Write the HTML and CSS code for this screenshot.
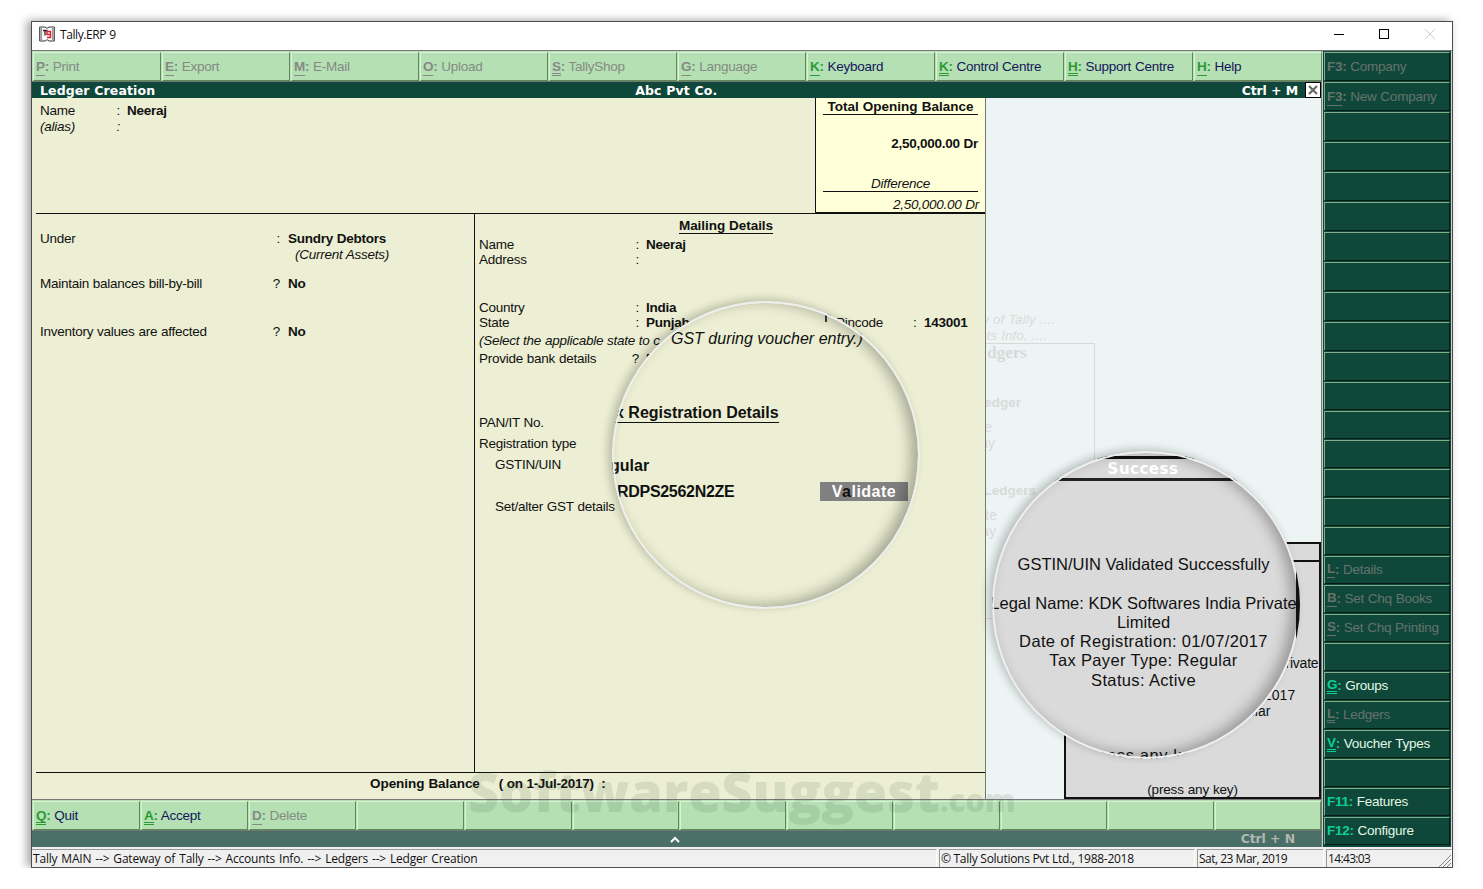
FILE: index.html
```
<!DOCTYPE html>
<html lang="en">

<head>
    <meta charset="UTF-8">
    <title>Tally.ERP 9</title>
    <link rel="stylesheet" href="styles.css">
</head>

<body>
    <div class="window">
        <!--Title bar-->
        <div class="titlebar">
            <svg class="app-icon" width="16" height="16" viewBox="0 0 16 16">
                <path d="M.7 1h5.300l1.500 1h1l1.500-1h5.300v14h-5.300l-1.500-1h-1l-1.500 1H.7z" fill="#fff" stroke="#333" />
                <path d="M2.200 1.500v13M13.800 1.500v13" stroke="#999" stroke-width="1.800" />
                <path d="M4 4.500h4.500M6 4.500v5" stroke="#222" stroke-width="1.300" fill="none" />
                <path d="M11.500 8.500H8v-3h3.500v6H8" stroke="#e01b24" stroke-width="1.400" fill="none" />
            </svg>
            <span class="app-name">Tally.ERP 9</span>
            <svg class="win-controls" width="104" height="12" viewBox="0 0 104 12" fill="none">
                <path d="M1 6.500h10" stroke="#000" />
                <rect x="46.500" y="1.500" width="9" height="9" stroke="#000" />
                <path d="M92 1l10 10M102 1L92 11" stroke="#ccc" />
            </svg>
        </div>

        <div class="main">
            <div class="left">
                <!--Top button bar-->
                <div class="toolbar top-buttons">
                    <div class="tool off"><b class="key">P</b><b>:</b> Print</div>
                    <div class="tool off"><b class="key">E</b><b>:</b> Export</div>
                    <div class="tool off"><b class="key">M</b><b>:</b> E-Mail</div>
                    <div class="tool off"><b class="key">O</b><b>:</b> Upload</div>
                    <div class="tool off"><b class="key double">S</b><b>:</b> TallyShop</div>
                    <div class="tool off"><b class="key">G</b><b>:</b> Language</div>
                    <div class="tool"><b class="key">K</b><b>:</b> Keyboard</div>
                    <div class="tool"><b class="key double">K</b><b>:</b> Control Centre</div>
                    <div class="tool"><b class="key double">H</b><b>:</b> Support Centre</div>
                    <div class="tool"><b class="key">H</b><b>:</b> Help</div>
                </div>

                <div class="screen-title">
                    <span>Ledger Creation</span>
                    <span class="company">Abc Pvt Co.</span>
                    <span class="shortcut">Ctrl + M</span>
                    <svg class="close" width="16" height="16" viewBox="0 0 16 16">
                        <rect x=".5" y=".5" width="15" height="15" fill="#fff" stroke="#000" />
                        <path d="M4 4l8 8M12 4l-8 8" stroke="#666" stroke-width="2.200" />
                    </svg>
                </div>

                <div class="workspace">
                    <!--Ledger form-->
                    <div class="form">
                        <div class="form-head">
                            <div class="identity">
                                <div class="field"><span class="label">Name</span><span class="sep">:</span><b>Neeraj</b></div>
                                <div class="field"><i class="label">(alias)</i><i class="sep">:</i></div>
                            </div>
                            <div class="totals">
                                <div class="totals-title">Total Opening Balance</div>
                                <div class="totals-value">2,50,000.00 Dr</div>
                                <div class="difference">Difference</div>
                                <div class="difference-value">2,50,000.00 Dr</div>
                            </div>
                        </div>

                        <div class="form-body">
                            <div class="grouping">
                                <div class="field"><span class="label">Under</span><span class="sep">:</span><b>Sundry Debtors</b></div>
                                <div class="field group-name"><i>(Current Assets)</i></div>
                                <div class="field bill"><span class="label">Maintain balances bill-by-bill</span><span class="sep">?</span><b>No</b></div>
                                <div class="field inventory"><span class="label">Inventory values are affected</span><span class="sep">?</span><b>No</b></div>
                            </div>
                            <div class="mailing">
                                <div class="mailing-title"><span>Mailing Details</span></div>
                                <div class="field"><span class="label">Name</span><span class="sep">:</span><b>Neeraj</b></div>
                                <div class="field"><span class="label">Address</span><span class="sep">:</span></div>
                                <div class="field country"><span class="label">Country</span><span class="sep">:</span><b>India</b></div>
                                <div class="field"><span class="label">State</span><span class="sep">:</span><b class="state">Punjab</b><span class="pincode">Pincode</span><span class="pin-sep">:</span><b>143001</b></div>
                                <div class="field note"><i>(Select the applicable state to c</i></div>
                                <div class="field bank"><span class="label">Provide bank details</span><span class="sep">?</span><b>No</b></div>
                                <div class="field pan"><span class="label">PAN/IT No.</span></div>
                                <div class="field reg"><span class="label">Registration type</span></div>
                                <div class="field gstin"><span class="label">GSTIN/UIN</span></div>
                                <div class="field alter"><span class="label">Set/alter GST details</span></div>
                            </div>
                        </div>

                        <div class="form-foot"><b>Opening Balance</b><b class="on-date">( on 1-Jul-2017)&nbsp; :</b></div>
                    </div>

                    <!--Menus behind the form-->
                    <div class="backdrop">
                        <div class="menu-path">
                            <div><span>y of Tally ....</span></div>
                            <div><span>nts Info. ....</span></div>
                        </div>
                        <div class="menu">
                            <div class="menu-title"><span>dgers</span></div>
                            <div class="menu-group single"><span>edger</span></div>
                            <div class="menu-item create"><span>e</span></div>
                            <div class="menu-item display"><span>ay</span></div>
                            <div class="menu-group multiple"><span>Ledgers</span></div>
                            <div class="menu-item create2"><span>te</span></div>
                            <div class="menu-item display2"><span>ay</span></div>
                        </div>
                        <div class="dialog">
                            <div class="dialog-head"></div>
                            <div class="dialog-text">
                                <br><br>
                                <span class="legal">Legal Name: KDK Softwares India Private</span><br>
                                <br>
                                Date of Registration: 01/07/2017<br>
                                Tax Payer Type: Regular
                            </div>
                            <div class="dialog-foot">(press any key)</div>
                        </div>
                    </div>
                </div>

                <!--Bottom button bar-->
                <div class="toolbar bottom-buttons">
                    <div class="tool"><b class="key double">Q</b><b>:</b> Quit</div>
                    <div class="tool"><b class="key double">A</b><b>:</b> Accept</div>
                    <div class="tool off"><b class="key">D</b><b>:</b> Delete</div>
                    <div class="tool"></div>
                    <div class="tool"></div>
                    <div class="tool"></div>
                    <div class="tool"></div>
                    <div class="tool"></div>
                    <div class="tool"></div>
                    <div class="tool"></div>
                    <div class="tool"></div>
                    <div class="tool"></div>
                </div>
                <div class="calculator">
                    <svg width="10" height="7" viewBox="0 0 10 7"><path d="M1 6l4-4 4 4" fill="none" stroke="#fff" stroke-width="2" /></svg>
                    <span class="calc-key">Ctrl + N</span>
                </div>
            </div>

            <!--Right button bar-->
            <div class="side">
                <div class="side-btn off"><b>F3:</b> Company</div>
                <div class="side-btn off"><b class="key">F3</b><b>:</b> New Company</div>
                <div class="side-btn"></div>
                <div class="side-btn"></div>
                <div class="side-btn"></div>
                <div class="side-btn"></div>
                <div class="side-btn"></div>
                <div class="side-btn"></div>
                <div class="side-btn"></div>
                <div class="side-btn"></div>
                <div class="side-btn"></div>
                <div class="side-btn"></div>
                <div class="side-btn"></div>
                <div class="side-btn"></div>
                <div class="side-btn"></div>
                <div class="side-btn"></div>
                <div class="side-btn"></div>
                <div class="side-btn off"><b class="key">L</b><b>:</b> Details</div>
                <div class="side-btn off"><b class="key">B</b><b>:</b> Set Chq Books</div>
                <div class="side-btn off"><b class="key">S</b><b>:</b> Set Chq Printing</div>
                <div class="side-btn"></div>
                <div class="side-btn"><b class="key double">G</b><b>:</b> Groups</div>
                <div class="side-btn off"><b class="key double">L</b><b>:</b> Ledgers</div>
                <div class="side-btn"><b class="key double">V</b><b>:</b> Voucher Types</div>
                <div class="side-btn"></div>
                <div class="side-btn"><b>F11:</b> Features</div>
                <div class="side-btn"><b>F12:</b> Configure</div>
            </div>
        </div>

        <!--Status bar-->
        <div class="statusbar">
            <div class="status path">Tally MAIN --&gt; Gateway of Tally --&gt; Accounts Info. --&gt; Ledgers --&gt; Ledger Creation</div>
            <div class="status copy">© Tally Solutions Pvt Ltd., 1988-2018</div>
            <div class="status date">Sat, 23 Mar, 2019</div>
            <div class="status time">14:43:03
                <svg class="grip" width="12" height="12" viewBox="0 0 12 12"><path d="M0 12L12 0M4 12l8-8M8 12l4-4" stroke="#888" fill="none" /></svg>
            </div>
        </div>

        <div class="watermark">SoftwareSuggest<span>.com</span></div>

        <!--Magnified tax details-->
        <div class="lens tax-lens">
            <div class="lens-note"><i>GST during voucher entry.)</i></div>
            <div class="lens-title"><span>x Registration Details</span></div>
            <div class="lens-type">gular</div>
            <div class="lens-gstin"><span>RDPS2562N2ZE</span><span class="validate">V<em>a</em>lidate</span></div>
            <svg class="fragment" width="6" height="9" viewBox="0 0 6 9"><path d="M1 8V1h5" stroke="#111" stroke-width="1.600" fill="none" /></svg>
        </div>

        <!--Magnified success message-->
        <div class="lens success-lens">
            <div class="success-head">Success</div>
            <div class="success-text">
                GSTIN/UIN Validated Successfully<br><br>
                Legal Name: KDK Softwares India Private<br>
                Limited<br>
                <span class="wide">Date of Registration: 01/07/2017</span><br>
                <span class="wide">Tax Payer Type: Regular</span><br>
                <span class="wide">Status: Active</span>
            </div>
            <div class="success-foot">(press any key)</div>
            <div class="success-edge"></div>
        </div>
    </div>
</body>

</html>
```

FILE: styles.css
```
/*global styling*/
* {
    box-sizing: border-box;
}

body {
    margin: 0;
    padding: 21px 0 0 31px;
    background-color: #fff;
    font-family: "Liberation Sans", Arial, sans-serif;
    font-size: 13.500px;
    letter-spacing: -0.25px;
    word-spacing: 0.3px;
    color: #111;
    overflow: hidden;
}

/*window frame*/
.window {
    position: relative;
    display: flex;
    flex-direction: column;
    width: 1422px;
    height: 847px;
    border: 1px solid #4c4c4c;
    background-color: #f0f0f0;
    box-shadow: -5px -1px 8px rgba(0, 0, 0, 0.28), 0 0 8px rgba(0, 0, 0, 0.1);
}

.titlebar {
    display: flex;
    align-items: center;
    height: 29px;
    padding: 0 15px 4px 7px;
    border-bottom: 1px solid #777;
    background-color: #fff;
}

.app-name {
    margin-left: 5px;
    font-family: "Open Sans", "Noto Sans", sans-serif;
    font-size: 12px;
    letter-spacing: -0.4px;
}

.win-controls {
    margin-left: auto;
}

.main {
    display: flex;
    height: 796px;
}

.left {
    display: flex;
    flex-direction: column;
    width: 1290px;
    border-right: 1px solid #777;
}

/*button bars*/
.toolbar {
    display: grid;
    height: 31px;
    padding: 1px 0 0 1px;
    background-color: #b4e0b4;
    border-bottom: 1px solid #777;
}

.top-buttons {
    grid-template-columns: repeat(10, 129px);
}

.bottom-buttons {
    grid-template-columns: repeat(5, 108px) repeat(7, 107px);
    height: 32px;
    border-top: 1px solid #777;
}

.tool {
    display: flex;
    align-items: center;
    margin-right: 1px;
    padding: 0 0 0 2px;
    border: 1px solid #d9f2d9;
    border-right-color: #5c8a55;
    border-bottom-color: #5c8a55;
    color: #15155a;
    white-space: pre;
}

.tool b {
    color: #2c9a34;
}

.tool.off,
.tool.off b {
    color: #858a85;
}

.key {
    height: 16px;
    margin-top: 2px;
    line-height: 14px;
    border-bottom: 1px solid currentColor;
}

.key.double {
    border-bottom: 3px double currentColor;
}

/*screen title*/
.screen-title {
    display: flex;
    height: 16px;
    padding-left: 8px;
    background-color: #0f483a;
    color: #fff;
    font: bold 12.500px/17px "DejaVu Sans", Verdana, sans-serif;
    letter-spacing: 0.1px;
}

.company {
    margin-left: 480px;
}

.shortcut {
    margin-left: auto;
    letter-spacing: -0.2px;
}

.close {
    margin-left: 7px;
}

.workspace {
    display: flex;
    height: 701px;
}

/*ledger form*/
.form {
    width: 954px;
    border-right: 1px solid #777;
    background-color: #ecefd3;
}

.form-head {
    display: flex;
    height: 116px;
    margin-left: 4px;
    border-bottom: 1px solid #111;
}

.identity {
    width: 779px;
    padding: 5px 0 0 4px;
}

.field {
    display: flex;
    height: 16px;
    line-height: 16px;
    white-space: pre;
}

.sep {
    width: 10px;
    margin-right: 7px;
    text-align: right;
}

.identity .label {
    width: 70px;
}

.totals {
    flex: 1;
    padding: 0 7px;
    border-left: 1px solid #111;
    border-bottom: 1px solid #111;
    background-color: #ffffd9;
    text-align: right;
}

.totals-title {
    height: 17px;
    border-bottom: 1px solid #111;
    font-weight: bold;
    line-height: 17px;
    text-align: center;
    letter-spacing: 0;
}

.totals-value {
    margin-top: 21px;
    font-weight: bold;
    line-height: 16px;
}

.difference {
    height: 17px;
    margin-top: 23px;
    border-bottom: 1px solid #111;
    font-style: italic;
    line-height: 17px;
    text-align: center;
}

.difference-value {
    margin: 5px -1px 0 0;
    font-style: italic;
    line-height: 15px;
}

.form-body {
    display: flex;
    height: 559px;
    margin-left: 4px;
    border-bottom: 1px solid #111;
}

.grouping {
    width: 439px;
    padding: 17px 0 0 4px;
    border-right: 1px solid #111;
}

.grouping .label {
    width: 230px;
}

.grouping .sep {
    margin-right: 8px;
}

.group-name {
    padding-left: 255px;
}

.bill {
    margin-top: 13px;
}

.inventory {
    margin-top: 32px;
}

.mailing {
    width: 510px;
    padding: 4px 0 0 4px;
}

.mailing .field {
    height: 15px;
    line-height: 15px;
}

.mailing .label {
    width: 150px;
}

.mailing-title {
    height: 19px;
    margin-right: 12px;
    font-weight: bold;
    line-height: 15px;
    letter-spacing: -0.05px;
    text-align: center;
}

.mailing-title span {
    display: inline-block;
    border-bottom: 1px solid #111;
}

.mailing .country {
    margin-top: 33px;
}

.state {
    width: 190px;
}

.pincode {
    width: 77px;
}

.pin-sep {
    width: 11px;
}

.mailing .note,
.mailing .bank {
    margin-top: 3px;
}

.mailing .pan {
    margin-top: 49px;
}

.mailing .reg,
.mailing .gstin {
    margin-top: 6px;
}

.mailing .gstin,
.mailing .alter {
    padding-left: 16px;
}

.mailing .alter {
    margin-top: 27px;
}

.form-foot {
    padding: 3px 0 0 338px;
    line-height: 16px;
}

.form-foot b {
    letter-spacing: -0.05px;
}

.form-foot .on-date {
    margin-left: 19px;
    letter-spacing: -0.3px;
}

/*menus behind the form*/
.backdrop {
    position: relative;
    flex: 1;
    overflow: hidden;
    background-color: #ecf5f4;
    color: #d8dada;
    white-space: nowrap;
    letter-spacing: 0;
}

.menu-path {
    width: 69px;
    padding-top: 214px;
    font-style: italic;
    font-size: 13px;
    line-height: 16px;
    letter-spacing: 0.2px;
}

.menu-path div,
.menu > div {
    display: flex;
    justify-content: flex-end;
}

.menu-path div:last-child {
    margin-right: 8px;
}

.menu {
    width: 109px;
    height: 276px;
    margin-top: -1px;
    border: 1px solid #d8dada;
    border-left: none;
}

.menu .menu-title {
    margin-right: 67px;
    font: bold 17px/18px "Liberation Serif", serif;
}

.menu .menu-group {
    font-weight: bold;
    line-height: 16px;
}

.menu .single {
    margin: 33px 73px 0 0;
}

.menu .multiple {
    margin: 32px 58px 0 0;
}

.menu-item {
    font-size: 14px;
    line-height: 16px;
}

.menu .create {
    margin: 8px 102px 0 0;
}

.menu .display {
    margin-right: 99px;
}

.menu .create2 {
    margin: 8px 97px 0 0;
}

.menu .display2 {
    margin-right: 98px;
}

.dialog {
    position: absolute;
    right: 0;
    bottom: 0;
    width: 257px;
    height: 257px;
    border: 2px solid #111;
    background-color: #dadada;
    color: #111;
    text-align: center;
}

.dialog-head {
    height: 18px;
    border-bottom: 2px solid #111;
}

.dialog-text {
    height: 220px;
    padding-top: 61px;
    font-size: 14px;
    line-height: 16px;
    letter-spacing: 0.1px;
}

.legal {
    margin: 0 -10px;
    letter-spacing: -0.25px;
}

.dialog-foot {
    letter-spacing: -0.15px;
}

/*calculator strip*/
.calculator {
    display: flex;
    align-items: center;
    height: 16px;
    padding-left: 638px;
    background-color: #4a6f67;
    font: bold 12.500px/16px "DejaVu Sans", Verdana, sans-serif;
    letter-spacing: -0.2px;
}

.calc-key {
    margin: 0 26px 0 auto;
    color: #b0b8b0;
}

/*right button bar*/
.side {
    width: 130px;
    padding: 1px 1px 0 1px;
    border-left: 1px solid #ccc;
    border-right: 1px solid #ccc;
    background-color: #0f483a;
}

.side-btn {
    display: flex;
    align-items: center;
    height: 28px;
    margin-bottom: 1px;
    padding: 0 0 2px 2px;
    border: 1px solid #7fae87;
    border-right-color: #061a14;
    border-bottom-color: #061a14;
    color: #e2f8e4;
    white-space: pre;
}

.side-btn:nth-child(-n+11) {
    height: 29px;
    padding-bottom: 0;
}

.side-btn b {
    color: #0ccf94;
}

.side-btn.off,
.side-btn.off b {
    color: #65736b;
}

/*status bar*/
.statusbar {
    display: flex;
    height: 20px;
    padding-top: 2px;
    font: 12px/17px "Open Sans", "Noto Sans", sans-serif;
    letter-spacing: -0.35px;
    word-spacing: 0;
    white-space: nowrap;
}

.status {
    margin-right: 2px;
    padding-left: 2px;
    border-top: 1px solid #999;
    border-left: 1px solid #999;
    border-right: 1px solid #fff;
}

.path {
    width: 905px;
    padding-left: 1px;
    border-left: none;
    letter-spacing: -0.2px;
    word-spacing: 1.100px;
}

.copy {
    width: 256px;
    padding-left: 1px;
    letter-spacing: -0.28px;
}

.date {
    width: 127px;
    padding-left: 1px;
    letter-spacing: -0.5px;
}

.time {
    display: flex;
    flex: 1;
    margin-right: 0;
    padding-left: 1px;
    letter-spacing: -0.65px;
}

.grip {
    margin: 5px 0 0 auto;
}

/*watermark over the page*/
.watermark {
    position: absolute;
    left: 436px;
    top: 734px;
    color: rgba(60, 80, 60, 0.12);
    font: 800 54px/70px "Open Sans", sans-serif;
    letter-spacing: -0.1px;
    white-space: nowrap;
}

.watermark span {
    font-size: 31px;
}

/*magnifying lenses*/
.lens {
    position: absolute;
    width: 308px;
    height: 308px;
    border-radius: 50%;
    overflow: hidden;
    white-space: nowrap;
    letter-spacing: 0;
    word-spacing: 0;
    box-shadow: -4px -2px 8px rgba(0, 0, 0, 0.22);
}

.lens::after {
    content: "";
    position: absolute;
    inset: 0;
    border: 2px solid #eee;
    border-radius: 50%;
    box-shadow: inset -7px -2px 14px rgba(0, 0, 0, 0.3);
}

.tax-lens {
    left: 580px;
    top: 279px;
    padding-top: 28px;
    background-color: #ecefd3;
    font-size: 16px;
    font-weight: bold;
    line-height: 20px;
}

.lens-note {
    padding-left: 59px;
    font-weight: normal;
}

.lens-title {
    margin: 54px 0 0 3px;
}

.lens-title span {
    display: inline-block;
    border-bottom: 1px solid #111;
    line-height: 19px;
}

.lens-type {
    margin: 33px 0 0 -2px;
}

.lens-gstin {
    display: flex;
    margin-top: 6px;
    padding-left: 5px;
    letter-spacing: -0.3px;
}

.validate {
    width: 88px;
    height: 19px;
    margin-left: auto;
    margin-right: 12px;
    background-color: #808080;
    color: #fff;
    text-align: center;
    letter-spacing: 0.5px;
}

.validate em {
    color: #111;
    font-style: normal;
}

.fragment {
    position: absolute;
    left: 213px;
    top: 13px;
}

.success-lens {
    left: 960px;
    top: 429px;
    padding-top: 5px;
    background-color: #dadada;
    font-size: 16.500px;
    line-height: 19.300px;
    text-align: center;
}

.success-head {
    height: 25px;
    padding-right: 6px;
    border-top: 3px solid #111;
    border-bottom: 3px solid #222;
    color: #fff;
    font: bold 15px/20px "DejaVu Sans", Verdana, sans-serif;
    letter-spacing: 0.5px;
}

.success-text {
    height: 191px;
    margin: 0 -7px 0 -12px;
    padding-top: 74px;
}

.wide {
    letter-spacing: 0.35px;
}

.success-foot {
    margin-top: 74px;
    letter-spacing: 0.6px;
}

.success-edge {
    position: absolute;
    right: 0;
    top: 30px;
    z-index: 1;
    width: 4px;
    height: 230px;
    background-color: #111;
}
```
